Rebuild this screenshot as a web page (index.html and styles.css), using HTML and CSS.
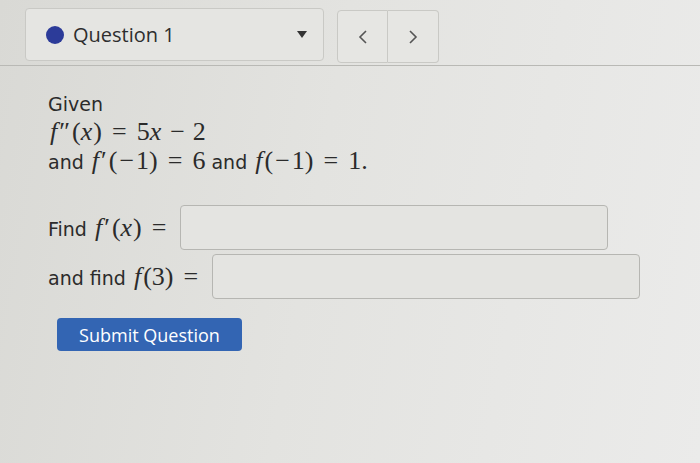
FILE: index.html
```html
<!DOCTYPE html>
<html lang="en">
<head>
    <meta charset="UTF-8">
    <meta name="viewport" content="width=device-width, initial-scale=1.0">
    <title>Question 1</title>
    <link rel="stylesheet" href="styles.css">
</head>
<body>
    <div class="header">
        <div class="select">
            <span class="dot"></span>
            <span class="select-label">Question 1</span>
            <span class="caret"></span>
        </div>
        <div class="nav">
            <button class="nav-btn">
                <svg width="10" height="16" viewBox="0 0 10 16"><path d="M8 2 L2 8 L8 14" fill="none" stroke="#555" stroke-width="1.6"/></svg>
            </button>
            <button class="nav-btn">
                <svg width="10" height="16" viewBox="0 0 10 16"><path d="M2 2 L8 8 L2 14" fill="none" stroke="#555" stroke-width="1.6"/></svg>
            </button>
        </div>
    </div>

    <div class="content">
        <div class="line">Given</div>
        <div class="line"><span class="math"><i class="fn">f</i><span class="pr">″</span>(<i>x</i>)<span class="rel">=</span>5<i>x</i><span class="bin">−</span>2</span></div>
        <div class="line">and <span class="math"><i class="fn">f</i><span class="pr">′</span>(<span class="neg">−</span>1)<span class="rel">=</span>6</span> and <span class="math"><i class="fn">f</i>(<span class="neg">−</span>1)<span class="rel">=</span>1.</span></div>

        <div class="answers">
            <div class="answer-row">
                <span class="answer-label">Find <span class="math"><i class="fn">f</i><span class="pr">′</span>(<i>x</i>)<span class="rel">=</span></span></span>
                <input class="answer" type="text">
            </div>
            <div class="answer-row">
                <span class="answer-label">and find <span class="math"><i class="fn">f</i>(3)<span class="rel">=</span></span></span>
                <input class="answer" type="text">
            </div>
        </div>

        <button class="submit">Submit Question</button>
    </div>
</body>
</html>
```

FILE: styles.css
```css
body {
    margin: 0;
    height: 463px;
    overflow: hidden;
    background: linear-gradient(100deg, #d9d9d5 0%, #e3e3e0 45%, #ebebea 100%);
    font-family: "DejaVu Sans", Verdana, sans-serif;
    color: #2b2b2b;
}

.header {
    display: flex;
    align-items: flex-start;
    height: 57px;
    padding: 8px 0 0 25px;
    border-bottom: 1px solid #b9b9b5;
}

.select {
    display: flex;
    align-items: center;
    width: 277px;
    height: 51px;
    padding-left: 20px;
    border: 1px solid #c9c9c5;
    border-radius: 4px;
    background: #e5e5e2;
}

.dot {
    width: 18px;
    height: 18px;
    border-radius: 50%;
    background: #2c3b99;
}

.select-label {
    margin-left: 9px;
    font-family: "Open Sans", sans-serif;
    font-size: 20px;
    color: #2e2e2e;
}

.caret {
    margin-left: auto;
    margin-right: 16px;
    width: 0;
    height: 0;
    border-left: 5px solid transparent;
    border-right: 5px solid transparent;
    border-top: 7px solid #333;
}

.nav {
    display: flex;
    margin-left: 13px;
    margin-top: 2px;
}

.nav-btn {
    display: flex;
    align-items: center;
    justify-content: center;
    width: 51px;
    height: 53px;
    padding: 0;
    border: 1px solid #c9c9c5;
    background: #e6e6e3;
}

.nav-btn:first-child {
    border-radius: 4px 0 0 4px;
}

.nav-btn:last-child {
    border-left: none;
    border-radius: 0 4px 4px 0;
}

.content {
    padding: 24px 0 0 48px;
}

.line {
    font-size: 19px;
    line-height: 28px;
}

.math {
    font-family: "Liberation Serif", "Times New Roman", serif;
    font-size: 26px;
}

.math i {
    padding-right: 1px;
}

.math .fn {
    padding: 0 2px 0 2px;
}

.pr {
    margin-right: 2px;
}

.neg {
    padding: 0 2px;
}

.rel {
    margin: 0 10px;
}

.bin {
    margin: 0 8px;
}

.answers {
    display: flex;
    flex-direction: column;
    gap: 4px;
    margin-top: 29px;
}

.answer-row {
    display: flex;
    align-items: center;
    gap: 14px;
}

.answer-label {
    font-size: 19px;
}

.answer-label .rel {
    margin-right: 0;
}

.answer {
    width: 428px;
    height: 45px;
    box-sizing: border-box;
    border: 1px solid #b6b6b2;
    border-radius: 4px;
    background: #e4e4e1;
}

.submit {
    margin-top: 19px;
    margin-left: 9px;
    width: 185px;
    height: 33px;
    border: none;
    border-radius: 4px;
    background: #3365b3;
    color: #fff;
    font-family: "Open Sans", sans-serif;
    font-size: 18px;
}
```
